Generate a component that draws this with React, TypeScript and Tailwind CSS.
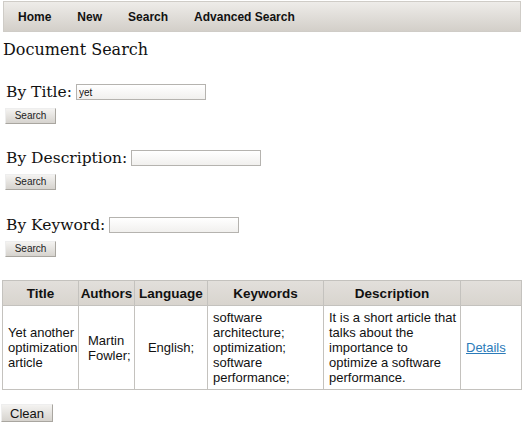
import React from "react";

const sans = { fontFamily: '"Liberation Sans", Arial, sans-serif' };

const navItems = ["Home", "New", "Search", "Advanced Search"];

function SmallButton({ label }: { label: string }) {
  return (
    <button
      className="block ml-[5px] h-[16px] w-[51px] border border-t-[#eeeeee] border-l-[#eeeeee] border-r-[#a9a6a0] border-b-[#a9a6a0] bg-gradient-to-b from-[#f4f3f1] to-[#d6d3ce] text-[10px] leading-none text-[#222] font-['Liberation_Sans',Arial,sans-serif]"
    >
      {label}
    </button>
  );
}

function SearchField({ label, value, top }: { label: string; value?: string; top: string }) {
  return (
    <div className={`flex flex-col ${top}`}>
      <div className="ml-[6px] flex items-center h-[20px]">
        <span className="text-[15.5px] leading-[20px] text-[#111]">{label}</span>
        <input
          defaultValue={value}
          className="ml-[4px] h-[16px] w-[130px] border border-[#b5b3af] bg-gradient-to-b from-white to-[#f1f0ee] px-[2px] text-[10px] text-[#111] outline-none font-['Liberation_Sans',Arial,sans-serif]"
        />
      </div>
      <div className="mt-[6px] flex">
        <SmallButton label="Search" />
      </div>
    </div>
  );
}

export default function App() {
  return (
    <div className="w-[524px] h-[425px] bg-white overflow-hidden font-['DejaVu_Serif',serif]">
      <nav
        className="mx-[3px] mt-[1px] h-[31px] flex items-center gap-[26px] pl-[14px] border border-[#cfccc7] bg-gradient-to-b from-[#eeece9] to-[#d3cfc9]"
        style={sans}
      >
        {navItems.map((item) => (
          <a key={item} className="text-[12px] font-bold text-[#111]">
            {item}
          </a>
        ))}
      </nav>

      <h1 className="ml-[3px] mt-[8px] text-[16px] leading-[20px] text-[#111]">Document Search</h1>

      <SearchField label="By Title:" value="yet" top="mt-[22px]" />
      <SearchField label="By Description:" top="mt-[24px]" />
      <SearchField label="By Keyword:" top="mt-[25px]" />

      <table
        className="mt-[23px] ml-[2px] w-[519px] border-collapse border border-[#c4c2be] text-[13px] text-[#111] table-fixed"
        style={sans}
      >
        <colgroup>
          <col className="w-[76px]" />
          <col className="w-[56px]" />
          <col className="w-[73px]" />
          <col className="w-[116px]" />
          <col className="w-[137px]" />
          <col className="w-[61px]" />
        </colgroup>
        <thead>
          <tr className="h-[25px] bg-gradient-to-b from-[#e2dfdb] to-[#d8d4ce]">
            {["Title", "Authors", "Language", "Keywords", "Description", ""].map((h, i) => (
              <th key={i} className="border border-[#c4c2be] text-[13.5px] font-bold text-center px-0 leading-[15px]">
                {h}
              </th>
            ))}
          </tr>
        </thead>
        <tbody>
          <tr className="h-[84px] leading-[15px] align-middle">
            <td className="border border-[#c4c2be] pl-[5px] pr-[1px]">Yet another optimization article</td>
            <td className="border border-[#c4c2be] pl-[9px] pr-[1px]">Martin Fowler;</td>
            <td className="border border-[#c4c2be] text-center">English;</td>
            <td className="border border-[#c4c2be] pl-[5px] pr-[1px]">
              software architecture; optimization; software performance;
            </td>
            <td className="border border-[#c4c2be] pl-[5px] pr-0 whitespace-nowrap">
              It is a short article that
              <br />
              talks about the
              <br />
              importance to
              <br />
              optimize a software
              <br />
              performance.
            </td>
            <td className="border border-[#c4c2be] pl-[5px]">
              <a className="text-[#2b7bb9] underline">Details</a>
            </td>
          </tr>
        </tbody>
      </table>

      <button
        className="block mt-[14px] ml-[1px] h-[18px] w-[52px] border border-t-[#eeeeee] border-l-[#eeeeee] border-r-[#a9a6a0] border-b-[#a9a6a0] bg-gradient-to-b from-[#f4f3f1] to-[#d6d3ce] text-[13px] leading-none text-[#111]"
        style={sans}
      >
        Clean
      </button>
    </div>
  );
}
